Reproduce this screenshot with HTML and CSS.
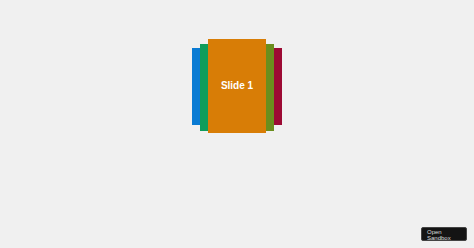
FILE: index.html
```html
<!DOCTYPE html>
<html>
<head>
<meta charset="utf-8">
<link rel="stylesheet" href="styles.css">
</head>
<body>
<div class="stage">
  <div class="card card-blue"></div>
  <div class="card card-red"></div>
  <div class="card card-green"></div>
  <div class="card card-olive"></div>
  <div class="card card-orange">Slide 1</div>
</div>
<a class="sandbox" href="#">Open<br>Sandbox</a>
</body>
</html>
```
FILE: styles.css
```css
html, body {
  margin: 0;
  padding: 0;
  background: #f0f0f0;
  font-family: "Liberation Sans", Arial, sans-serif;
}
.stage {
  position: relative;
  width: 474px;
  height: 248px;
}
.card {
  position: absolute;
  display: flex;
  align-items: center;
  justify-content: center;
  color: #fff;
  font-weight: bold;
  font-size: 10px;
  padding-bottom: 1px;
  box-sizing: border-box;
}
.card-blue { left: 192px; top: 48px; width: 48px; height: 77px; background: #0a7bd3; z-index: 1; }
.card-red { left: 234px; top: 48px; width: 48px; height: 77px; background: #9c0a33; z-index: 1; }
.card-green { left: 200px; top: 44px; width: 54px; height: 87px; background: #0e9d5b; z-index: 2; }
.card-olive { left: 220px; top: 44px; width: 54px; height: 87px; background: #6a8e1d; z-index: 2; }
.card-orange { left: 208px; top: 39px; width: 58px; height: 94px; background: #d87d06; z-index: 3; }
.sandbox {
  position: absolute;
  left: 421px;
  top: 227px;
  width: 46px;
  height: 14px;
  box-sizing: border-box;
  padding: 1px 0 0 5px;
  background: #141414;
  border: 1px solid #444;
  border-radius: 2px;
  color: #ddd;
  text-decoration: none;
  font-size: 6px;
  line-height: 6px;
}
```
